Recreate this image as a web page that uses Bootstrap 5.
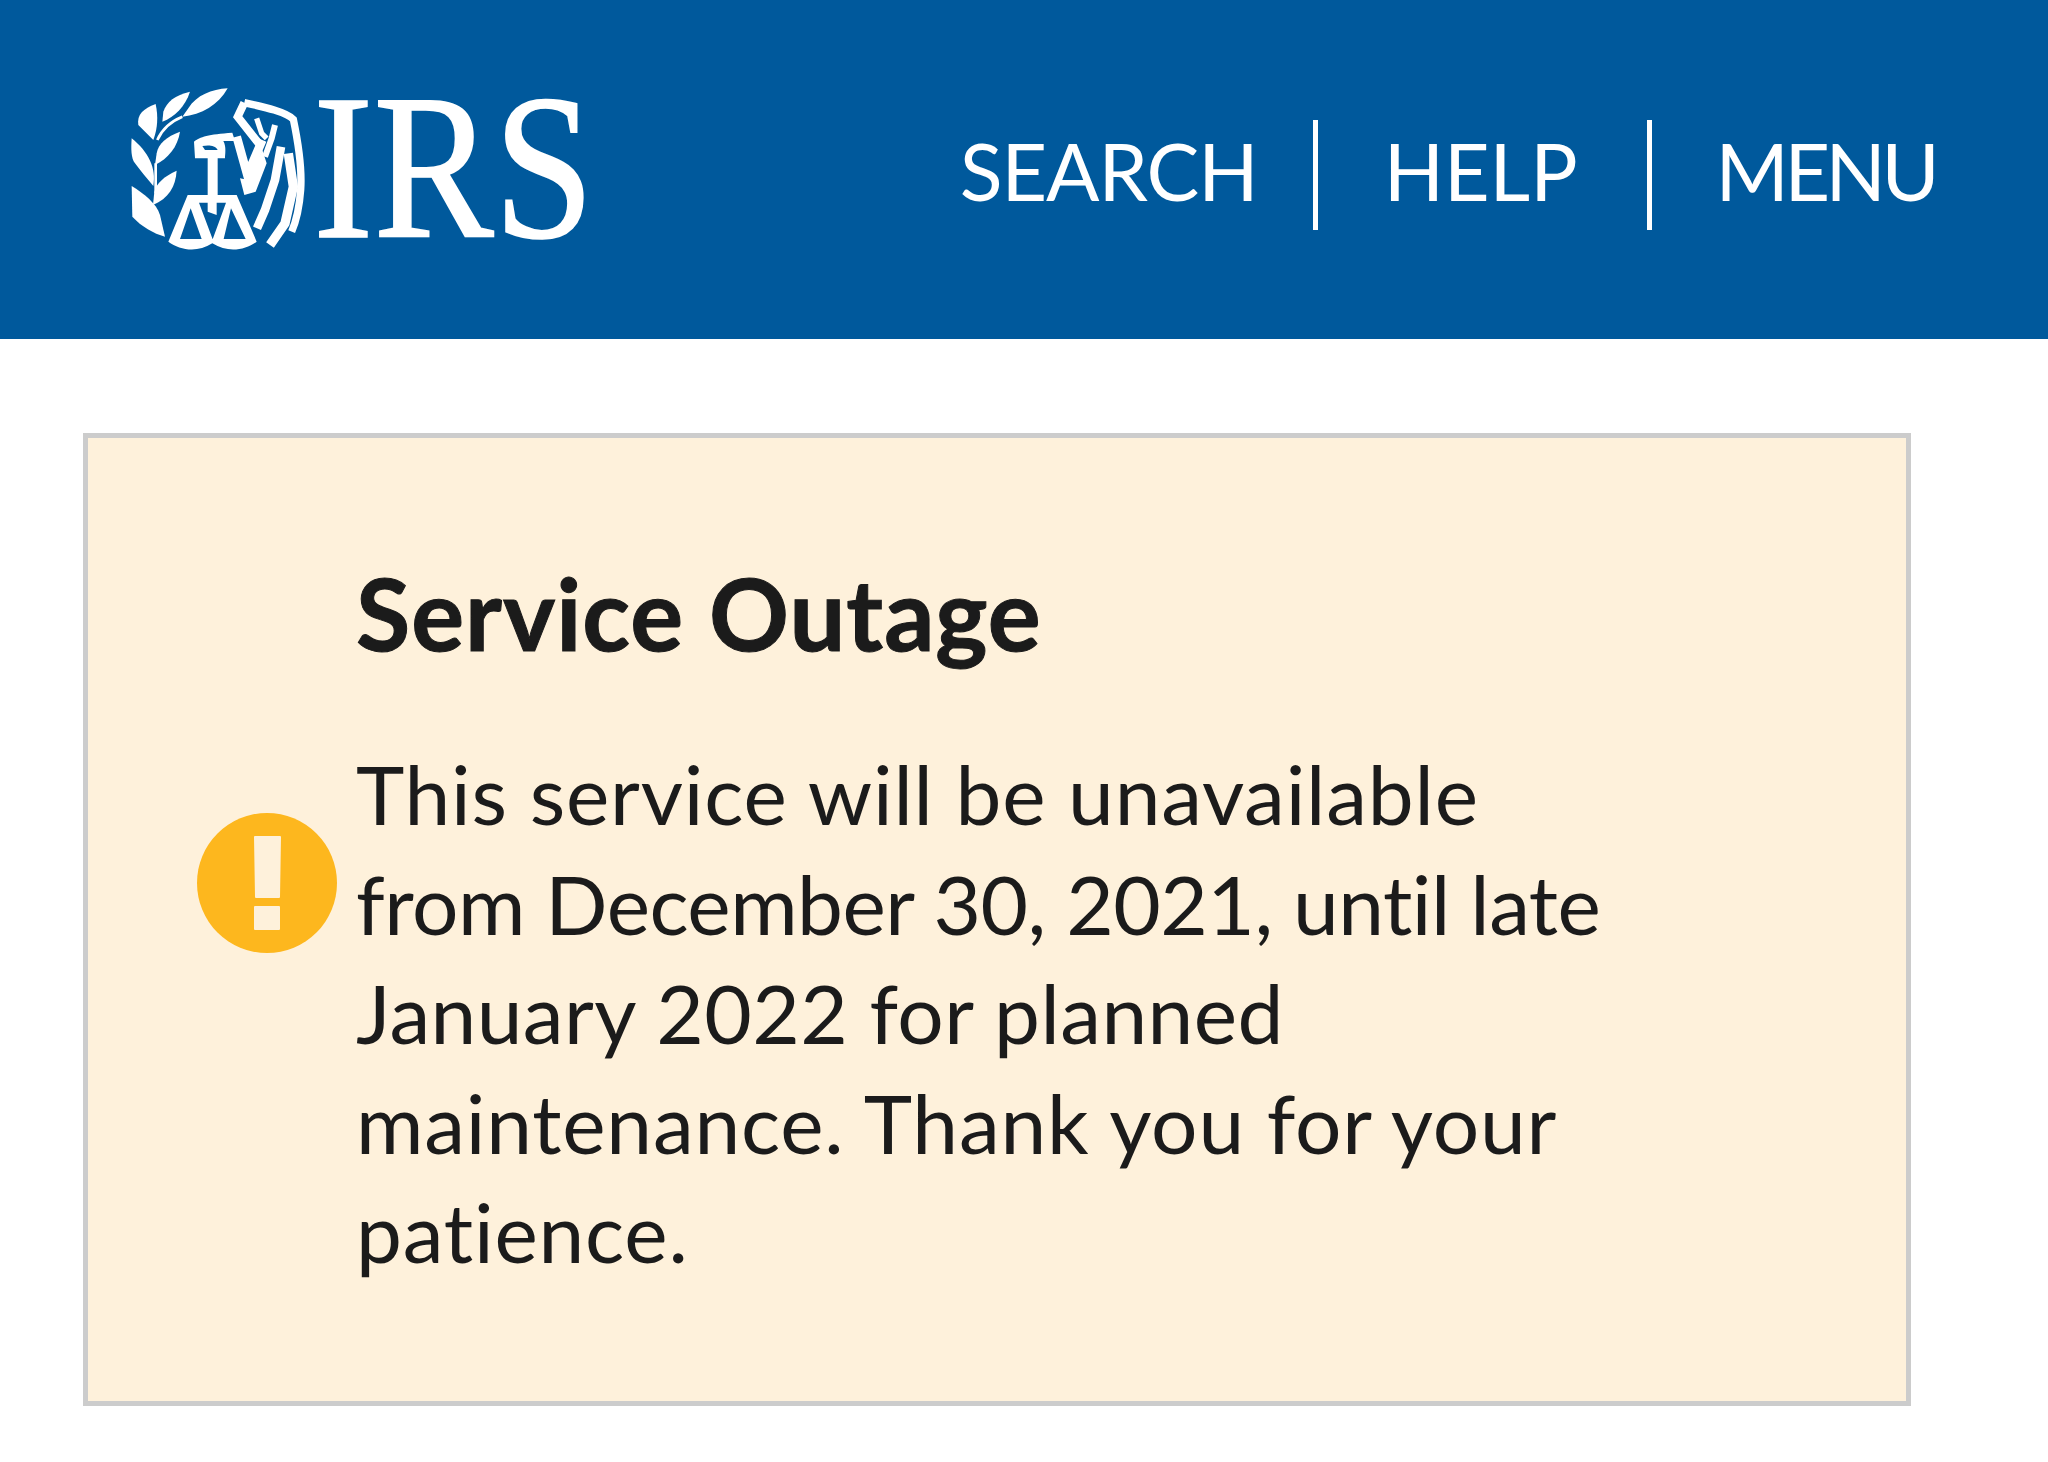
<!DOCTYPE html>
<html lang="en">
<head>
    <meta charset="UTF-8">
    <meta name="viewport" content="width=device-width, initial-scale=1.0">
    <title>IRS Service Outage</title>
    <link rel="stylesheet" href="https://cdn.jsdelivr.net/npm/bootstrap@5.3.0/dist/css/bootstrap.min.css">
    <style>
        body { background: #fff; color: #1b1b1b; font-family: Lato, "Liberation Sans", sans-serif; font-variant-ligatures: none; }
        .irs-header { background: #00599c; height: 339px; padding: 50px 113px 0 100px; }
        .irs-logo { display: block; width: 560px; height: 240px; }
        .irs-logo text { font-family: "Liberation Serif", serif; font-size: 621px; fill: #fff; stroke: #fff; stroke-width: 5px; }
        .irs-links { margin-top: 70px; height: 110px; }
        .irs-link { color: #fff; font-size: 79px; line-height: 102px; height: 110px; text-decoration: none; letter-spacing: -1px; }
        .irs-link + .irs-link { border-left: 5px solid #fff; }
        .irs-link:nth-child(1) { padding: 0 55px 0 0; }
        .irs-link:nth-child(2) { padding: 0 69px 0 66px; letter-spacing: 0; }
        .irs-link:nth-child(3) { padding: 0 0 0 64px; letter-spacing: -4.5px; }
        .outage-box { margin: 94px 0 0 83px; width: 1828px; height: 973px; background: #fef1db; border: 5px solid #ccc; padding: 118px 0 0 109px; }
        .outage-icon { width: 140px; height: 140px; margin-top: 257px; flex: none; }
        .outage-text { margin-left: 19px; width: 1300px; }
        .outage-title { font-size: 99px; font-weight: 700; line-height: 120px; margin: -3px 0 66px; letter-spacing: 1px; -webkit-text-stroke: 1px #1b1b1b; }
        .outage-msg { font-size: 82px; line-height: 109.6px; margin: 0; letter-spacing: .8px; }
        .msg-line-date { letter-spacing: -.5px; }
        .msg-line-year { letter-spacing: .4px; }
    </style>
</head>
<body>
    <header class="irs-header d-flex justify-content-between align-items-start">
        <a href="#" class="d-block">
            <svg class="irs-logo" viewBox="0 -30 1680 720" aria-label="IRS">
                <g transform="translate(75 60)">
                    <g fill="#fff">
                        <path d="M308 25C260 28 215 45 190 85L172 110C230 105 280 75 308 25Z"/>
                        <path d="M195 35C150 45 125 65 115 95L112 125C150 110 180 80 195 35Z"/>
                        <path d="M92 72C55 85 35 105 40 135L85 180C98 145 100 110 92 72Z"/>
                        <path d="M165 155C125 170 100 190 95 220L90 255C130 235 158 200 165 155Z"/>
                        <path d="M20 175C18 205 18 235 30 250C45 270 65 295 85 318C95 265 70 215 20 175Z"/>
                        <path d="M155 272C115 290 95 310 88 335L84 375C130 355 152 320 155 272Z"/>
                        <path d="M20 318L22 410C50 440 85 460 120 470L105 405C95 370 55 340 20 318Z"/>
                        <path fill-rule="evenodd" d="M207 185C225 170 250 163 322 158L330 183H295C305 200 300 225 300 235H210ZM232 198C250 195 270 195 278 210H240Z"/>
                        <path d="M248 230H278V350H248Z"/>
                        <path fill-rule="evenodd" d="M188 345H335L395 485C360 510 310 520 262 490C215 520 165 510 130 485ZM197 385L165 477H230ZM318 385L296 477H362ZM222 368H248V395L275 405V368H303L263 478Z"/>
                        <path d="M345 295L358 345L392 335L425 250L412 210L370 300Z"/>
                    </g>
                    <g fill="none" stroke="#fff">
                        <path stroke-width="8" d="M172 110C135 125 110 150 97 180M92 250V340"/>
                        <path stroke-width="22" d="M358 68C420 82 480 95 505 118C520 190 532 260 527 330C523 385 515 420 500 455"/>
                        <path stroke-width="24" d="M358 68L338 110L405 195"/>
                        <path stroke-width="26" d="M335 170L367 285L412 180"/>
                        <path stroke-width="16" d="M395 115L410 160L425 175"/>
                        <path stroke-width="18" d="M450 135L440 175L420 230"/>
                        <path stroke-width="26" d="M468 200L450 300L420 390L396 445"/>
                        <path stroke-width="28" d="M490 220L505 320L480 430L435 495"/>
                    </g>
                </g>
                <text x="640" y="530" textLength="842" lengthAdjust="spacingAndGlyphs">IRS</text>
            </svg>
        </a>
        <nav class="irs-links d-flex">
            <a class="irs-link" href="#">SEARCH</a>
            <a class="irs-link" href="#">HELP</a>
            <a class="irs-link" href="#">MENU</a>
        </nav>
    </header>
    <main class="outage-box d-flex align-items-start">
        <svg class="outage-icon" viewBox="0 0 140 140">
            <circle cx="70" cy="70" r="70" fill="#fdb71e"/>
            <path fill="#fef1db" stroke="#fef1db" stroke-width="2" stroke-linejoin="round" d="M58 24H83L82 84H59ZM58 94H82V116H58Z"/>
        </svg>
        <div class="outage-text">
            <h1 class="outage-title">Service Outage</h1>
            <p class="outage-msg">
                <span class="d-block">This service will be unavailable</span>
                <span class="d-block msg-line-date">from December 30, 2021, until late</span>
                <span class="d-block msg-line-year">January 2022 for planned</span>
                <span class="d-block">maintenance. Thank you for your</span>
                <span class="d-block">patience.</span>
            </p>
        </div>
    </main>
</body>
</html>
